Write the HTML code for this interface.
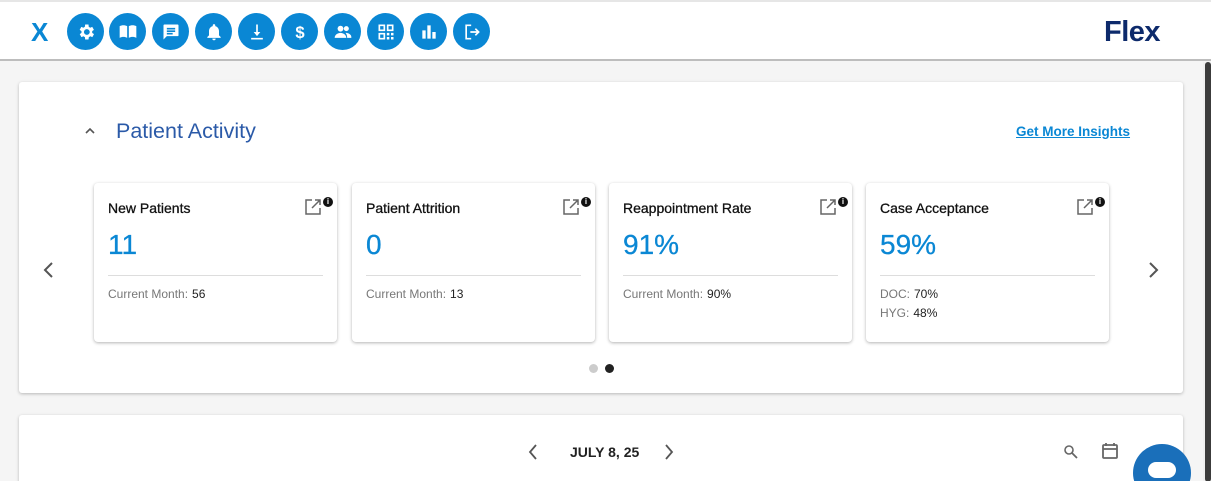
<!DOCTYPE html>
<html><head><meta charset="utf-8"><style>
*{box-sizing:border-box;margin:0;padding:0}
html,body{width:1211px;height:481px;overflow:hidden}
body{background:#f5f5f5;font-family:"Liberation Sans",Arial,sans-serif;position:relative}
.top{position:absolute;left:0;top:0;width:1211px;height:61px;background:#fff;border-top:2px solid #e6e6e6;border-bottom:2px solid #bdbdbd}
.ic{position:absolute;top:13px;width:37px;height:37px;border-radius:50%;background:#0a87d4;display:flex;align-items:center;justify-content:center}
.ic svg{width:20px;height:20px;fill:#fff}
.card{position:absolute;background:#fff;border-radius:3px;box-shadow:0 1px 3px rgba(0,0,0,.25)}
.k{position:absolute;top:183px;width:243px;height:159px;background:#fff;border-radius:4px;box-shadow:0 1px 3px rgba(0,0,0,.3)}
.k h3{position:absolute;left:14px;top:17px;font-size:14px;font-weight:normal;color:#111;-webkit-text-stroke:.3px #111}
.k .v{position:absolute;left:14px;top:46px;font-size:28px;color:#0a87d4;-webkit-text-stroke:.3px #0a87d4}
.k .hr{position:absolute;left:14px;right:14px;top:92px;border-top:1px solid #ddd}
.k .s{position:absolute;left:14px;font-size:12px;color:#777}
.k .s b{font-weight:normal;color:#222;margin-left:4px}
.k .ext{position:absolute;right:16px;top:16px;width:16px;height:16px}
.k .inf{position:absolute;right:4px;top:14px;width:10px;height:10px;border-radius:50%;background:#111;color:#fff;font-size:8px;font-weight:bold;text-align:center;line-height:10px}
</style></head><body>
<div class="top">
<div style="position:absolute;left:31px;top:16px;font-size:26px;font-weight:bold;color:#0a87d4;line-height:28px">X</div>
<div style="position:absolute;left:1104px;top:14px;font-size:29px;font-weight:bold;color:#0d2a6b;letter-spacing:-0.5px;line-height:32px">Flex</div>
</div>
<div class="ic" style="left:67px"><svg viewBox="0 0 24 24"><path d="M19.4 13a7.5 7.5 0 000-2l2.1-1.6-2-3.5-2.5 1a7 7 0 00-1.7-1L15 3h-4l-.4 2.9a7 7 0 00-1.7 1l-2.5-1-2 3.5L6.6 11a7.5 7.5 0 000 2l-2.1 1.6 2 3.5 2.5-1a7 7 0 001.7 1L11 21h4l.4-2.9a7 7 0 001.7-1l2.5 1 2-3.5zM13 15.5a3.5 3.5 0 110-7 3.5 3.5 0 010 7z"/></svg></div>
<div class="ic" style="left:109px"><svg viewBox="0 0 24 24"><path d="M2 5c3-1.5 6-1.5 9 0v14c-3-1.5-6-1.5-9 0zM13 5c3-1.5 6-1.5 9 0v14c-3-1.5-6-1.5-9 0z"/></svg></div>
<div class="ic" style="left:152px"><svg viewBox="0 0 24 24"><path d="M4 3h16a1 1 0 011 1v12a1 1 0 01-1 1H7l-4 4V4a1 1 0 011-1zm3 4v2h10V7zm0 3v2h10v-2zm0 3v2h7v-2z"/></svg></div>
<div class="ic" style="left:195px"><svg viewBox="0 0 24 24"><path d="M12 22a2 2 0 002-2h-4a2 2 0 002 2zm6-6V11c0-3-2-5.5-4.5-6V4a1.5 1.5 0 00-3 0v1C8 5.5 6 8 6 11v5l-2 2v1h16v-1z"/></svg></div>
<div class="ic" style="left:238px"><svg viewBox="0 0 24 24"><path d="M5 19h14v2H5zM11 3h2v9h3l-4 5-4-5h3z"/></svg></div>
<div class="ic" style="left:281px"><svg viewBox="0 0 24 24"><text x="12" y="19" text-anchor="middle" font-size="20" font-family="Liberation Sans" font-weight="bold" fill="#fff">$</text></svg></div>
<div class="ic" style="left:324px"><svg viewBox="0 0 24 24"><circle cx="9" cy="8" r="3.5"/><circle cx="16" cy="8" r="3"/><path d="M2 19c0-4 4-6 7-6s7 2 7 6zM15 13c3 0 7 1.5 7 5v1h-5c0-3-1-5-2-6z"/></svg></div>
<div class="ic" style="left:367px"><svg viewBox="0 0 24 24"><path d="M3 3h8v8H3zm2 2v4h4V5zM13 3h8v8h-8zm2 2v4h4V5zM3 13h8v8H3zm2 2v4h4v-4zM13 13h3v3h-3zm5 0h3v3h-3zm-5 5h3v3h-3zm5 0h3v3h-3z"/></svg></div>
<div class="ic" style="left:410px"><svg viewBox="0 0 24 24"><path d="M4 10h4v10H4zm6-6h4v16h-4zm6 8h4v8h-4z"/></svg></div>
<div class="ic" style="left:453px"><svg viewBox="0 0 24 24" style="fill:none;stroke:#fff;stroke-width:2"><path d="M11 4H5v16h6M10 12h10M16 8l4 4-4 4"/></svg></div>

<div class="card" style="left:19px;top:82px;width:1164px;height:311px"></div>
<svg style="position:absolute;left:84px;top:126px" width="12" height="10" viewBox="0 0 12 10"><path d="M2 7l4-4 4 4" fill="none" stroke="#555" stroke-width="1.6"/></svg>
<div style="position:absolute;left:116px;top:119px;font-size:21.5px;color:#2b5aa8">Patient Activity</div>
<div style="position:absolute;left:1016px;top:124px;font-size:13.5px;font-weight:bold;color:#0a87d4;text-decoration:underline">Get More Insights</div>
<svg style="position:absolute;left:42px;top:261px" width="14" height="18"><path d="M10 2L3 9l7 7" fill="none" stroke="#555" stroke-width="2"/></svg>
<svg style="position:absolute;left:1146px;top:261px" width="14" height="18"><path d="M4 2l7 7-7 7" fill="none" stroke="#555" stroke-width="2"/></svg>

<div class="k" style="left:94px"><h3>New Patients</h3><svg class="ext" viewBox="0 0 16 16"><path d="M7 1H1v14h14V9M10 1h5v5M15 1L7 9" fill="none" stroke="#666" stroke-width="1.5"/></svg><div class="inf">i</div><div class="v">11</div><div class="hr"></div><div class="s" style="top:104px">Current Month:<b>56</b></div></div>
<div class="k" style="left:352px"><h3>Patient Attrition</h3><svg class="ext" viewBox="0 0 16 16"><path d="M7 1H1v14h14V9M10 1h5v5M15 1L7 9" fill="none" stroke="#666" stroke-width="1.5"/></svg><div class="inf">i</div><div class="v">0</div><div class="hr"></div><div class="s" style="top:104px">Current Month:<b>13</b></div></div>
<div class="k" style="left:609px"><h3>Reappointment Rate</h3><svg class="ext" viewBox="0 0 16 16"><path d="M7 1H1v14h14V9M10 1h5v5M15 1L7 9" fill="none" stroke="#666" stroke-width="1.5"/></svg><div class="inf">i</div><div class="v">91%</div><div class="hr"></div><div class="s" style="top:104px">Current Month:<b>90%</b></div></div>
<div class="k" style="left:866px"><h3>Case Acceptance</h3><svg class="ext" viewBox="0 0 16 16"><path d="M7 1H1v14h14V9M10 1h5v5M15 1L7 9" fill="none" stroke="#666" stroke-width="1.5"/></svg><div class="inf">i</div><div class="v">59%</div><div class="hr"></div><div class="s" style="top:104px">DOC:<b>70%</b></div><div class="s" style="top:123px">HYG:<b>48%</b></div></div>

<div style="position:absolute;left:589px;top:364px;width:9px;height:9px;border-radius:50%;background:#ccc"></div>
<div style="position:absolute;left:605px;top:364px;width:9px;height:9px;border-radius:50%;background:#222"></div>

<div class="card" style="left:19px;top:415px;width:1164px;height:80px"></div>
<svg style="position:absolute;left:527px;top:443px" width="12" height="18"><path d="M9 2L3 9l6 7" fill="none" stroke="#555" stroke-width="1.8"/></svg>
<div style="position:absolute;left:570px;top:444px;font-size:14px;font-weight:bold;color:#222">JULY 8, 25</div>
<svg style="position:absolute;left:663px;top:443px" width="12" height="18"><path d="M3 2l6 7-6 7" fill="none" stroke="#555" stroke-width="1.8"/></svg>
<svg style="position:absolute;left:1063px;top:444px" width="15" height="15"><circle cx="6" cy="6" r="4" fill="none" stroke="#666" stroke-width="1.6"/><path d="M9 9l5 5" stroke="#666" stroke-width="1.8"/></svg>
<svg style="position:absolute;left:1101px;top:442px" width="18" height="18"><rect x="2" y="3" width="14" height="13" rx="1" fill="none" stroke="#666" stroke-width="1.8"/><path d="M2 7h14M5 1v3M13 1v3" stroke="#666" stroke-width="1.8"/></svg>
<div style="position:absolute;left:1133px;top:444px;width:58px;height:58px;border-radius:50%;background:#1a6fba"></div>
<div style="position:absolute;left:1148px;top:462px;width:28px;height:16px;border-radius:8px;background:#fff"></div>
<div style="position:absolute;left:1203px;top:62px;width:8px;height:419px;background:#f0f0f0"></div>
<div style="position:absolute;left:1205px;top:62px;width:6px;height:420px;background:#3c3c3c;border-radius:3px"></div>
</body></html>
